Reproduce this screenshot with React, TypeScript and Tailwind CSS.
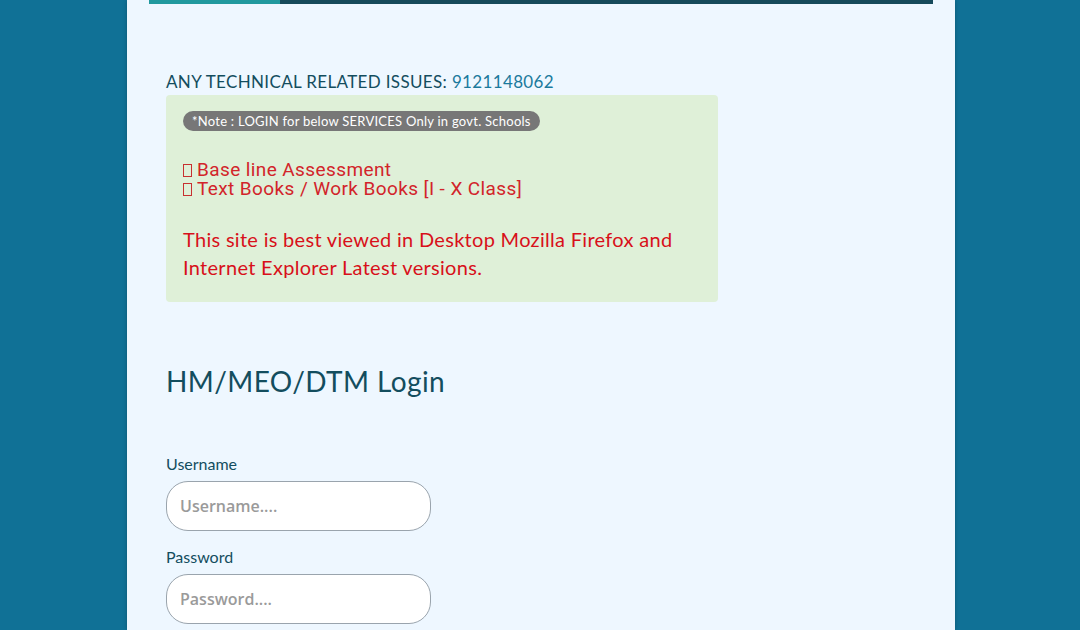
import React from "react";

function Tofu() {
  return <span className="mr-[5px] inline-block h-[13px] w-[9px] border border-[#c83030] align-[-1px]" />;
}

export default function App() {
  return (
    <div className="flex h-[630px] w-full justify-center overflow-hidden bg-[#107196] font-['Lato',sans-serif]">
      <div className="ml-[2px] h-full w-[828px] bg-[#eef7ff] px-[22px] shadow-[0_0_4px_rgba(0,0,0,0.25)]">
        <div className="flex h-[4px]">
          <div className="w-[131px] bg-[#21999e]" />
          <div className="flex-1 bg-[#164a5b]" />
        </div>

        <div className="px-[17px] pt-[68px]">
          <p className="text-[17px] leading-[20px] tracking-[0.35px] text-[#134d5e]">
            ANY TECHNICAL RELATED ISSUES: <span className="text-[#1b7a9c]">9121148062</span>
          </p>

          <div className="mt-[3px] w-[552px] rounded-[4px] bg-[#dff0d8] px-[17px] pb-[21px] pt-[13px]">
            <span className="inline-block rounded-full bg-[#777777] px-[9px] py-[2px] text-[13px] leading-[16px] tracking-[0.25px] text-white">
              *Note : LOGIN for below SERVICES Only in govt. Schools
            </span>

            <div className="mt-[28px] font-['Roboto',sans-serif] text-[19px] leading-[19px] tracking-[0.4px] text-[#d2242a]">
              <div>
                <Tofu />
                Base line Assessment
              </div>
              <div>
                <Tofu />
                Text Books / Work Books [I - X Class]
              </div>
            </div>

            <p className="mt-[27px] text-[20px] leading-[28px] tracking-[0.3px] text-[#d8101a]">
              This site is best viewed in Desktop Mozilla Firefox and
              <br />
              Internet Explorer Latest versions.
            </p>
          </div>

          <h2 className="mt-[62px] text-[28px] leading-[34px] tracking-[0.4px] text-[#134d5e]">HM/MEO/DTM Login</h2>

          <label className="mt-[57px] block text-[16px] leading-[18px] text-[#134d5e]">Username</label>
          <input
            placeholder="Username...."
            className="mt-[8px] h-[50px] w-[265px] rounded-[22px] border border-[#9aa4ad] bg-white px-[13px] font-['Open_Sans',sans-serif] text-[16px] font-semibold placeholder:text-[#9a9a9a]"
          />

          <label className="mt-[17px] block text-[16px] leading-[18px] text-[#134d5e]">Password</label>
          <input
            placeholder="Password...."
            className="mt-[8px] h-[50px] w-[265px] rounded-[22px] border border-[#9aa4ad] bg-white px-[13px] font-['Open_Sans',sans-serif] text-[16px] font-semibold placeholder:text-[#9a9a9a]"
          />
        </div>
      </div>
    </div>
  );
}
